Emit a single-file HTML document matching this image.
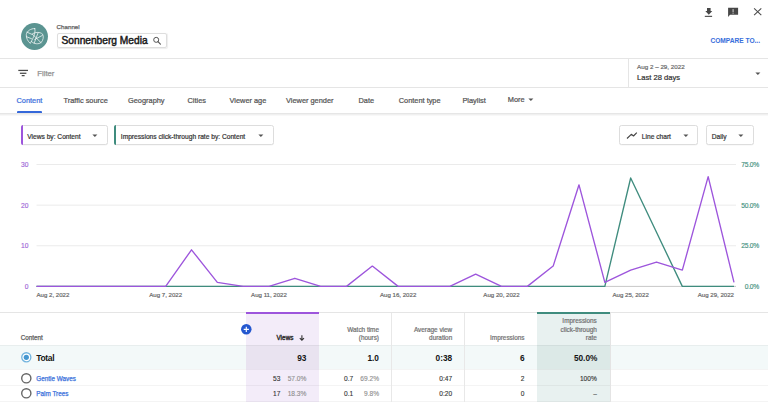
<!DOCTYPE html>
<html><head><meta charset="utf-8"><style>
html,body{margin:0;padding:0;background:#fff;}
#root{position:relative;width:768px;height:402px;overflow:hidden;background:#fff;font-family:"Liberation Sans",sans-serif;}
.t{position:absolute;white-space:nowrap;}
.b{position:absolute;}
</style></head><body><div id="root">
<svg class="b" style="left:21.2px;top:23px" width="27" height="27" viewBox="0 0 27 27">
<circle cx="13.5" cy="13.45" r="13.45" fill="#5b9491"/>
<g fill="none" stroke="#fff" stroke-width="0.75" stroke-linejoin="round" stroke-linecap="round" opacity="0.95">
<path d="M13.75 5.5 C9.8 5.5 5.8 8 5.3 11.5 C5 14.9 6.8 18.4 9.3 20.4 C11.3 16.4 15.2 10.5 13.75 5.5Z"/>
<path d="M6 9.2 L11.3 11.5 M5.5 13.7 L10.5 15.7"/>
<path d="M11.3 11 C13.75 9 18.7 8.7 21.5 11 C23 13.5 22.2 17.4 20.2 19.4 C17.7 21.4 13.25 21.4 10.3 18.4"/>
<path d="M11.8 11.5 L20.2 19.9 M17.2 9.5 L13.25 19.9 M21.2 12.5 L13.75 16.4"/>
</g></svg>
<div class="t" style="left:56.60px;top:24px;font-size:6.2px;line-height:6.2px;color:#606060;font-weight:400;-webkit-text-stroke:0.25px #606060;">Channel</div>
<div class="b" style="left:57.2px;top:33.2px;width:109.80px;height:14.80px;border:1px solid #dedede;border-radius:2px;box-sizing:border-box;box-shadow:0.5px 0.5px 1px rgba(0,0,0,0.07)"></div>
<div class="t" style="left:61.50px;top:36px;font-size:10.2px;line-height:10.2px;color:#1a1a1a;font-weight:400;-webkit-text-stroke:0.45px #1a1a1a;">Sonnenberg Media</div>
<svg class="b" style="left:152px;top:36px" width="10" height="10" viewBox="0 0 10 10">
<circle cx="4.2" cy="3.85" r="2.5" fill="none" stroke="#555" stroke-width="1"/>
<path d="M6 5.7 L8.4 8.1" stroke="#555" stroke-width="1.15" stroke-linecap="round"/></svg>
<svg class="b" style="left:704px;top:7px" width="10" height="11" viewBox="0 0 10 11">
<path d="M3 0.9 H6.6 V4.1 H8.3 L4.8 7.8 L1.3 4.1 H3Z" fill="#474747"/>
<rect x="0.8" y="8.8" width="7.3" height="1.1" fill="#474747"/></svg>
<svg class="b" style="left:727px;top:7px" width="12" height="11" viewBox="0 0 12 11">
<path d="M1.1 0.7 H11.1 V7.8 H3 L1.1 10Z" fill="#474747"/>
<rect x="5.6" y="2.1" width="0.95" height="3.1" fill="#ddd"/><rect x="5.6" y="5.8" width="0.95" height="0.95" fill="#ddd"/></svg>
<svg class="b" style="left:753px;top:7px" width="10" height="10" viewBox="0 0 10 10">
<path d="M1.1 1.4 L8.3 8.2 M8.3 1.4 L1.1 8.2" stroke="#4a4a4a" stroke-width="1.05"/></svg>
<div class="t" style="right:8.00px;text-align:right;top:38px;font-size:6.6px;line-height:6.6px;color:#3a6fdc;font-weight:700;-webkit-text-stroke:0.05px #3a6fdc;">COMPARE TO...</div>
<div class="b" style="left:0px;top:58px;width:768.00px;height:1.00px;background:#e5e5e5"></div>
<svg class="b" style="left:17.5px;top:69px" width="11" height="8" viewBox="0 0 11 8">
<rect x="0.3" y="0.8" width="9.7" height="1.25" fill="#4a4a4a"/><rect x="1.9" y="3.65" width="6.5" height="1.25" fill="#4a4a4a"/><rect x="3.7" y="6" width="2.9" height="1.25" fill="#4a4a4a"/></svg>
<div class="t" style="left:37.30px;top:70px;font-size:7.7px;line-height:7.7px;color:#929292;font-weight:400;-webkit-text-stroke:0.25px #929292;">Filter</div>
<div class="b" style="left:628.3px;top:59px;width:1.00px;height:28.00px;background:#e5e5e5"></div>
<div class="t" style="left:637.10px;top:64px;font-size:6.25px;line-height:6.25px;color:#6a6a6a;font-weight:400;-webkit-text-stroke:0.2px #6a6a6a;">Aug 2 – 29, 2022</div>
<div class="t" style="left:637.10px;top:74px;font-size:7.6px;line-height:7.6px;color:#303030;font-weight:400;-webkit-text-stroke:0.2px #303030;">Last 28 days</div>
<svg class="b" style="left:754.6px;top:71.6px" width="6" height="4" viewBox="0 0 6 4"><path d="M0.4 0.4 H5.4 L2.9 3.1Z" fill="#555"/></svg>
<div class="b" style="left:0px;top:87px;width:768.00px;height:1.00px;background:#e5e5e5"></div>
<div class="t" style="left:16.50px;top:97px;font-size:7.4px;line-height:7.4px;color:#3d6fdc;font-weight:400;-webkit-text-stroke:0.22px #3d6fdc;">Content</div>
<div class="t" style="left:63.50px;top:97px;font-size:7.4px;line-height:7.4px;color:#545454;font-weight:400;-webkit-text-stroke:0.22px #545454;">Traffic source</div>
<div class="t" style="left:128.00px;top:97px;font-size:7.4px;line-height:7.4px;color:#545454;font-weight:400;-webkit-text-stroke:0.22px #545454;">Geography</div>
<div class="t" style="left:187.50px;top:97px;font-size:7.4px;line-height:7.4px;color:#545454;font-weight:400;-webkit-text-stroke:0.22px #545454;">Cities</div>
<div class="t" style="left:229.50px;top:97px;font-size:7.4px;line-height:7.4px;color:#545454;font-weight:400;-webkit-text-stroke:0.22px #545454;">Viewer age</div>
<div class="t" style="left:286.00px;top:97px;font-size:7.4px;line-height:7.4px;color:#545454;font-weight:400;-webkit-text-stroke:0.22px #545454;">Viewer gender</div>
<div class="t" style="left:358.50px;top:97px;font-size:7.4px;line-height:7.4px;color:#545454;font-weight:400;-webkit-text-stroke:0.22px #545454;">Date</div>
<div class="t" style="left:398.70px;top:97px;font-size:7.4px;line-height:7.4px;color:#545454;font-weight:400;-webkit-text-stroke:0.22px #545454;">Content type</div>
<div class="t" style="left:462.40px;top:97px;font-size:7.4px;line-height:7.4px;color:#545454;font-weight:400;-webkit-text-stroke:0.22px #545454;">Playlist</div>
<div class="t" style="left:507.80px;top:96px;font-size:7.4px;line-height:7.4px;color:#545454;font-weight:400;-webkit-text-stroke:0.22px #545454;">More</div>
<svg class="b" style="left:527.6px;top:97.6px" width="6" height="4" viewBox="0 0 6 4"><path d="M0.4 0.4 H5.4 L2.9 3.1Z" fill="#555"/></svg>
<div class="b" style="left:16.5px;top:110.5px;width:25.90px;height:2.00px;background:#3568da;border-radius:1px 1px 0 0"></div>
<div class="b" style="left:0px;top:112.8px;width:768.00px;height:1.00px;background:#e6e6e6"></div>
<div class="b" style="left:0px;top:113.8px;width:768.00px;height:1.00px;background:#f0f0f0"></div>
<div class="b" style="left:0px;top:114.8px;width:768.00px;height:1.00px;background:#f8f8f8"></div>
<div class="b" style="left:20.8px;top:125.4px;width:87.00px;height:20.10px;border:1px solid #dddddd;border-radius:2.5px;box-sizing:border-box;background:#fff;box-shadow:0 0.5px 0.5px rgba(0,0,0,0.05)"></div>
<div class="b" style="left:20.8px;top:125.4px;width:2.10px;height:20.10px;background:#9d55dc;border-radius:2px 0 0 2px"></div>
<div class="t" style="left:27.20px;top:134px;font-size:6.65px;line-height:6.65px;color:#333;font-weight:400;-webkit-text-stroke:0.2px #333;">Views by: Content</div>
<svg class="b" style="left:92.2px;top:134.3px" width="6" height="4" viewBox="0 0 6 4"><path d="M0.4 0.4 H5.4 L2.9 3.1Z" fill="#555"/></svg>
<div class="b" style="left:114.3px;top:125.4px;width:159.90px;height:20.10px;border:1px solid #dddddd;border-radius:2.5px;box-sizing:border-box;background:#fff;box-shadow:0 0.5px 0.5px rgba(0,0,0,0.05)"></div>
<div class="b" style="left:114.3px;top:125.4px;width:2.10px;height:20.10px;background:#3f8c7e;border-radius:2px 0 0 2px"></div>
<div class="t" style="left:120.80px;top:134px;font-size:6.65px;line-height:6.65px;color:#333;font-weight:400;-webkit-text-stroke:0.2px #333;">Impressions click-through rate by: Content</div>
<svg class="b" style="left:257.9px;top:134.3px" width="6" height="4" viewBox="0 0 6 4"><path d="M0.4 0.4 H5.4 L2.9 3.1Z" fill="#555"/></svg>
<div class="b" style="left:619.4px;top:125.4px;width:78.90px;height:20.10px;border:1px solid #dddddd;border-radius:2.5px;box-sizing:border-box;background:#fff;box-shadow:0 0.5px 0.5px rgba(0,0,0,0.05)"></div>
<div class="t" style="left:641.80px;top:134px;font-size:6.65px;line-height:6.65px;color:#333;font-weight:400;-webkit-text-stroke:0.2px #333;">Line chart</div>
<svg class="b" style="left:683.4px;top:134.3px" width="6" height="4" viewBox="0 0 6 4"><path d="M0.4 0.4 H5.4 L2.9 3.1Z" fill="#555"/></svg>
<svg class="b" style="left:626px;top:131px" width="12" height="9" viewBox="0 0 12 9">
<path d="M1 7.5 L5.3 3.3 L7.5 5 L10.8 1.7" fill="none" stroke="#444" stroke-width="1.15" stroke-linejoin="round"/></svg>
<div class="b" style="left:705.5px;top:125.4px;width:48.10px;height:20.10px;border:1px solid #dddddd;border-radius:2.5px;box-sizing:border-box;background:#fff;box-shadow:0 0.5px 0.5px rgba(0,0,0,0.05)"></div>
<div class="t" style="left:711.80px;top:134px;font-size:6.65px;line-height:6.65px;color:#333;font-weight:400;-webkit-text-stroke:0.2px #333;">Daily</div>
<svg class="b" style="left:738.2px;top:134.3px" width="6" height="4" viewBox="0 0 6 4"><path d="M0.4 0.4 H5.4 L2.9 3.1Z" fill="#555"/></svg>
<svg class="b" style="left:0;top:0" width="768" height="402" viewBox="0 0 768 402"><line x1="36.5" y1="245.77" x2="736.0" y2="245.77" stroke="#ebebeb" stroke-width="1"/><line x1="36.5" y1="205.13" x2="736.0" y2="205.13" stroke="#ebebeb" stroke-width="1"/><line x1="36.5" y1="164.50" x2="736.0" y2="164.50" stroke="#ebebeb" stroke-width="1"/><line x1="36.5" y1="286.4" x2="736.0" y2="286.4" stroke="#c8c8c8" stroke-width="1"/>
<polyline points="36.50,286.40 62.33,286.40 88.17,286.40 114.00,286.40 139.83,286.40 165.67,286.40 191.50,286.40 217.33,286.40 243.17,286.40 269.00,286.40 294.83,286.40 320.67,286.40 346.50,286.40 372.33,286.40 398.17,286.40 424.00,286.40 449.83,286.40 475.67,286.40 501.50,286.40 527.33,286.40 553.17,286.40 579.00,286.40 604.83,286.40 630.67,177.99 656.50,232.28 682.33,286.40 708.17,286.40 734.00,286.40" fill="none" stroke="#3f8c7e" stroke-width="1.35" stroke-linejoin="round"/>
<polyline points="36.50,286.40 62.33,286.40 88.17,286.40 114.00,286.40 139.83,286.40 165.67,286.40 191.50,249.83 217.33,282.34 243.17,286.40 269.00,286.40 294.83,278.27 320.67,286.40 346.50,286.40 372.33,266.08 398.17,286.40 424.00,286.40 449.83,286.40 475.67,274.21 501.50,286.40 527.33,286.40 553.17,266.08 579.00,184.82 604.83,282.34 630.67,270.15 656.50,262.02 682.33,270.15 708.17,176.69 734.00,282.34" fill="none" stroke="#9d55dc" stroke-width="1.35" stroke-linejoin="round"/>
</svg>
<div class="t" style="right:739.80px;text-align:right;top:284px;font-size:6.7px;line-height:6.7px;color:#a066d8;font-weight:400;-webkit-text-stroke:0.15px #a066d8;letter-spacing:-0.15px;">0</div>
<div class="t" style="right:739.80px;text-align:right;top:243px;font-size:6.7px;line-height:6.7px;color:#a066d8;font-weight:400;-webkit-text-stroke:0.15px #a066d8;letter-spacing:-0.15px;">10</div>
<div class="t" style="right:739.80px;text-align:right;top:203px;font-size:6.7px;line-height:6.7px;color:#a066d8;font-weight:400;-webkit-text-stroke:0.15px #a066d8;letter-spacing:-0.15px;">20</div>
<div class="t" style="right:739.80px;text-align:right;top:162px;font-size:6.7px;line-height:6.7px;color:#a066d8;font-weight:400;-webkit-text-stroke:0.15px #a066d8;letter-spacing:-0.15px;">30</div>
<div class="t" style="right:9.00px;text-align:right;top:284px;font-size:6.7px;line-height:6.7px;color:#46927f;font-weight:400;-webkit-text-stroke:0.15px #46927f;letter-spacing:-0.25px;">0.0%</div>
<div class="t" style="right:9.00px;text-align:right;top:243px;font-size:6.7px;line-height:6.7px;color:#46927f;font-weight:400;-webkit-text-stroke:0.15px #46927f;letter-spacing:-0.25px;">25.0%</div>
<div class="t" style="right:9.00px;text-align:right;top:203px;font-size:6.7px;line-height:6.7px;color:#46927f;font-weight:400;-webkit-text-stroke:0.15px #46927f;letter-spacing:-0.25px;">50.0%</div>
<div class="t" style="right:9.00px;text-align:right;top:162px;font-size:6.7px;line-height:6.7px;color:#46927f;font-weight:400;-webkit-text-stroke:0.15px #46927f;letter-spacing:-0.25px;">75.0%</div>
<div class="t" style="left:36.50px;top:292px;font-size:6.1px;line-height:6.1px;color:#6a6a6a;font-weight:400;-webkit-text-stroke:0.2px #6a6a6a;">Aug 2, 2022</div>
<div class="t" style="left:105.67px;width:120px;text-align:center;top:292px;font-size:6.1px;line-height:6.1px;color:#6a6a6a;font-weight:400;-webkit-text-stroke:0.2px #6a6a6a;">Aug 7, 2022</div>
<div class="t" style="left:209.00px;width:120px;text-align:center;top:292px;font-size:6.1px;line-height:6.1px;color:#6a6a6a;font-weight:400;-webkit-text-stroke:0.2px #6a6a6a;">Aug 11, 2022</div>
<div class="t" style="left:338.17px;width:120px;text-align:center;top:292px;font-size:6.1px;line-height:6.1px;color:#6a6a6a;font-weight:400;-webkit-text-stroke:0.2px #6a6a6a;">Aug 16, 2022</div>
<div class="t" style="left:441.50px;width:120px;text-align:center;top:292px;font-size:6.1px;line-height:6.1px;color:#6a6a6a;font-weight:400;-webkit-text-stroke:0.2px #6a6a6a;">Aug 20, 2022</div>
<div class="t" style="left:570.67px;width:120px;text-align:center;top:292px;font-size:6.1px;line-height:6.1px;color:#6a6a6a;font-weight:400;-webkit-text-stroke:0.2px #6a6a6a;">Aug 25, 2022</div>
<div class="t" style="right:34.00px;text-align:right;top:292px;font-size:6.1px;line-height:6.1px;color:#6a6a6a;font-weight:400;-webkit-text-stroke:0.2px #6a6a6a;">Aug 29, 2022</div>
<div class="b" style="left:0px;top:312px;width:768.00px;height:1.00px;background:#e5e5e5"></div>
<div class="b" style="left:246px;top:313px;width:72.70px;height:89.00px;background:#f3ecf9"></div>
<div class="b" style="left:537.4px;top:313px;width:72.70px;height:89.00px;background:#e8f1f0"></div>
<div class="b" style="left:246px;top:312.4px;width:72.70px;height:2.00px;background:#9d55dc"></div>
<div class="b" style="left:537.4px;top:312.4px;width:72.70px;height:2.00px;background:#3f8c7e"></div>
<div class="b" style="left:0px;top:345.3px;width:768.00px;height:24.20px;background:#f3f9f9"></div>
<div class="b" style="left:246px;top:345.3px;width:72.70px;height:24.20px;background:#e9e3f0"></div>
<div class="b" style="left:537.4px;top:345.3px;width:72.70px;height:24.20px;background:#dce9e7"></div>
<div class="b" style="left:0px;top:344.8px;width:768.00px;height:1.00px;background:rgba(0,0,0,0.045)"></div>
<div class="b" style="left:0px;top:369.2px;width:768.00px;height:1.00px;background:rgba(0,0,0,0.045)"></div>
<div class="b" style="left:0px;top:385px;width:768.00px;height:1.00px;background:rgba(0,0,0,0.045)"></div>
<div class="b" style="left:0px;top:401px;width:768.00px;height:1.00px;background:rgba(0,0,0,0.045)"></div>
<div class="b" style="left:391px;top:313px;width:1.00px;height:89.00px;background:#e8e8e8"></div>
<div class="b" style="left:464.3px;top:313px;width:1.00px;height:89.00px;background:#e8e8e8"></div>
<div class="b" style="left:610px;top:313px;width:1.00px;height:89.00px;background:#e4e4e4"></div>
<div class="t" style="left:20.70px;top:335px;font-size:6.3px;line-height:6.3px;color:#606060;font-weight:400;-webkit-text-stroke:0.25px #606060;">Content</div>
<svg class="b" style="left:240.5px;top:324.3px" width="11" height="11" viewBox="0 0 11 11">
<circle cx="5.3" cy="5.3" r="5.25" fill="#2457cf"/><path d="M5.3 2.7 V7.9 M2.7 5.3 H7.9" stroke="#fff" stroke-width="1.15"/></svg>
<div class="t" style="right:474.40px;text-align:right;top:335px;font-size:6.3px;line-height:6.3px;color:#333;font-weight:400;-webkit-text-stroke:0.4px #333;letter-spacing:0.1px;">Views</div>
<svg class="b" style="left:299px;top:334.5px" width="6" height="6" viewBox="0 0 6 6">
<path d="M2.9 0.3 V5.2 M0.8 3.1 L2.9 5.2 L5 3.1" fill="none" stroke="#333" stroke-width="1.1"/></svg>
<div class="t" style="right:389.00px;text-align:right;top:327px;font-size:6.4px;line-height:6.4px;color:#707070;font-weight:400;-webkit-text-stroke:0.2px #707070;">Watch time</div>
<div class="t" style="right:389.00px;text-align:right;top:335px;font-size:6.4px;line-height:6.4px;color:#707070;font-weight:400;-webkit-text-stroke:0.2px #707070;">(hours)</div>
<div class="t" style="right:315.80px;text-align:right;top:327px;font-size:6.4px;line-height:6.4px;color:#707070;font-weight:400;-webkit-text-stroke:0.2px #707070;">Average view</div>
<div class="t" style="right:315.80px;text-align:right;top:335px;font-size:6.4px;line-height:6.4px;color:#707070;font-weight:400;-webkit-text-stroke:0.2px #707070;">duration</div>
<div class="t" style="right:243.50px;text-align:right;top:335px;font-size:6.4px;line-height:6.4px;color:#707070;font-weight:400;-webkit-text-stroke:0.2px #707070;">Impressions</div>
<div class="t" style="right:171.20px;text-align:right;top:318px;font-size:6.4px;line-height:6.4px;color:#707070;font-weight:400;-webkit-text-stroke:0.2px #707070;">Impressions</div>
<div class="t" style="right:171.20px;text-align:right;top:327px;font-size:6.4px;line-height:6.4px;color:#707070;font-weight:400;-webkit-text-stroke:0.2px #707070;">click-through</div>
<div class="t" style="right:171.20px;text-align:right;top:335px;font-size:6.4px;line-height:6.4px;color:#707070;font-weight:400;-webkit-text-stroke:0.2px #707070;">rate</div>
<svg class="b" style="left:20.6px;top:352.2px" width="11" height="11" viewBox="0 0 11 11">
<circle cx="5.3" cy="5.3" r="4.55" fill="#fff" stroke="#72b4de" stroke-width="1.3"/><circle cx="5.3" cy="5.3" r="2.6" fill="#4597d0"/></svg>
<div class="t" style="left:36.30px;top:354px;font-size:8.5px;line-height:8.5px;color:#151515;font-weight:700;letter-spacing:-0.35px;">Total</div>
<div class="t" style="right:461.60px;text-align:right;top:354px;font-size:8.3px;line-height:8.3px;color:#151515;font-weight:700;">93</div>
<div class="t" style="right:389.00px;text-align:right;top:354px;font-size:8.3px;line-height:8.3px;color:#151515;font-weight:700;">1.0</div>
<div class="t" style="right:315.80px;text-align:right;top:354px;font-size:8.3px;line-height:8.3px;color:#151515;font-weight:700;">0:38</div>
<div class="t" style="right:243.50px;text-align:right;top:354px;font-size:8.3px;line-height:8.3px;color:#151515;font-weight:700;">6</div>
<div class="t" style="right:170.60px;text-align:right;top:354px;font-size:8.3px;line-height:8.3px;color:#151515;font-weight:700;">50.0%</div>
<svg class="b" style="left:20.7px;top:372.50px;" width="11" height="11" viewBox="0 0 11 11">
<circle cx="5.3" cy="5.3" r="4.6" fill="none" stroke="#666" stroke-width="1.4"/></svg>
<div class="t" style="left:36.30px;top:376px;font-size:6.35px;line-height:6.35px;color:#4174dc;font-weight:400;-webkit-text-stroke:0.25px #4174dc;">Gentle Waves</div>
<div class="t" style="right:487.60px;text-align:right;top:376px;font-size:6.6px;line-height:6.6px;color:#333;font-weight:400;-webkit-text-stroke:0.12px #333;">53</div>
<div class="t" style="right:461.60px;text-align:right;top:376px;font-size:6.6px;line-height:6.6px;color:#8f8f8f;font-weight:400;-webkit-text-stroke:0.12px #8f8f8f;">57.0%</div>
<div class="t" style="right:414.80px;text-align:right;top:376px;font-size:6.6px;line-height:6.6px;color:#333;font-weight:400;-webkit-text-stroke:0.12px #333;">0.7</div>
<div class="t" style="right:389.00px;text-align:right;top:376px;font-size:6.6px;line-height:6.6px;color:#8f8f8f;font-weight:400;-webkit-text-stroke:0.12px #8f8f8f;">69.2%</div>
<div class="t" style="right:315.80px;text-align:right;top:376px;font-size:6.6px;line-height:6.6px;color:#333;font-weight:400;-webkit-text-stroke:0.12px #333;">0:47</div>
<div class="t" style="right:243.50px;text-align:right;top:376px;font-size:6.6px;line-height:6.6px;color:#333;font-weight:400;-webkit-text-stroke:0.12px #333;">2</div>
<div class="t" style="right:171.20px;text-align:right;top:376px;font-size:6.6px;line-height:6.6px;color:#333;font-weight:400;-webkit-text-stroke:0.12px #333;">100%</div>
<svg class="b" style="left:20.7px;top:388.30px;" width="11" height="11" viewBox="0 0 11 11">
<circle cx="5.3" cy="5.3" r="4.6" fill="none" stroke="#666" stroke-width="1.4"/></svg>
<div class="t" style="left:36.30px;top:391px;font-size:6.35px;line-height:6.35px;color:#4174dc;font-weight:400;-webkit-text-stroke:0.25px #4174dc;">Palm Trees</div>
<div class="t" style="right:487.60px;text-align:right;top:391px;font-size:6.6px;line-height:6.6px;color:#333;font-weight:400;-webkit-text-stroke:0.12px #333;">17</div>
<div class="t" style="right:461.60px;text-align:right;top:391px;font-size:6.6px;line-height:6.6px;color:#8f8f8f;font-weight:400;-webkit-text-stroke:0.12px #8f8f8f;">18.3%</div>
<div class="t" style="right:414.80px;text-align:right;top:391px;font-size:6.6px;line-height:6.6px;color:#333;font-weight:400;-webkit-text-stroke:0.12px #333;">0.1</div>
<div class="t" style="right:389.00px;text-align:right;top:391px;font-size:6.6px;line-height:6.6px;color:#8f8f8f;font-weight:400;-webkit-text-stroke:0.12px #8f8f8f;">9.8%</div>
<div class="t" style="right:315.80px;text-align:right;top:391px;font-size:6.6px;line-height:6.6px;color:#333;font-weight:400;-webkit-text-stroke:0.12px #333;">0:20</div>
<div class="t" style="right:243.50px;text-align:right;top:391px;font-size:6.6px;line-height:6.6px;color:#333;font-weight:400;-webkit-text-stroke:0.12px #333;">0</div>
<div class="t" style="right:171.20px;text-align:right;top:391px;font-size:6.6px;line-height:6.6px;color:#333;font-weight:400;-webkit-text-stroke:0.12px #333;">–</div>
</div></body></html>
